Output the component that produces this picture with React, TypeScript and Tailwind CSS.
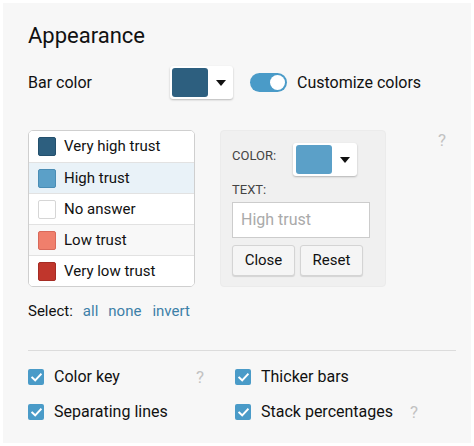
import React from "react";

const font = { fontFamily: "Roboto, 'Liberation Sans', sans-serif" };

function Caret() {
  return (
    <svg width="10" height="6" viewBox="0 0 10 6" className="shrink-0">
      <path d="M0 0 L10 0 L5 6 Z" fill="#111" />
    </svg>
  );
}

function Check() {
  return (
    <span className="flex h-[16px] w-[16px] items-center justify-center rounded-[2px] bg-[#4a9bc8]">
      <svg width="11" height="9" viewBox="0 0 11 9">
        <path d="M1.2 4.6 L4.2 7.4 L9.8 1.4" stroke="#fff" strokeWidth="2" fill="none" strokeLinecap="square" />
      </svg>
    </span>
  );
}

const rows = [
  { label: "Very high trust", color: "bg-[#2d5f7f]", border: "border-[#24506d]", bg: "bg-white" },
  { label: "High trust", color: "bg-[#5ba0c8]", border: "border-[#4a8db5]", bg: "bg-[#e9f2f8]" },
  { label: "No answer", color: "bg-white", border: "border-[#d6d6d6]", bg: "bg-white" },
  { label: "Low trust", color: "bg-[#f07f6c]", border: "border-[#d9695a]", bg: "bg-[#f8f8f8]" },
  { label: "Very low trust", color: "bg-[#c0362c]", border: "border-[#a52c24]", bg: "bg-white" },
];

export default function App() {
  return (
    <div className="h-[446px] w-[474px] bg-white p-[3px]" style={font}>
      <div className="flex h-[440px] w-[468px] flex-col bg-[#f7f7f7] pl-[25px] pr-[15px] pt-[20px] text-[#111]">
        <div className="text-[22px] leading-[26px]">Appearance</div>

        <div className="mt-[17px] flex h-[33px] items-center">
          <div className="w-[142px] text-[16px]">Bar color</div>
          <div className="flex h-[33px] w-[63px] items-center rounded-[3px] bg-white pl-[2px] shadow-[0_1px_2px_rgba(0,0,0,0.25)]">
            <div className="h-[29px] w-[36px] rounded-[3px] bg-[#2d5f7f]" />
            <div className="flex flex-1 justify-center">
              <Caret />
            </div>
          </div>
          <div className="ml-[17px] flex h-[19px] w-[37px] items-center justify-end rounded-full bg-[#4a9bc8] pr-[2px]">
            <div className="h-[15px] w-[15px] rounded-full bg-white" />
          </div>
          <div className="ml-[10px] text-[16px]">Customize colors</div>
        </div>

        <div className="mt-[31px] flex items-start">
          <div className="w-[167px] overflow-hidden rounded-[5px] border border-[#cfcfcf] bg-white">
            {rows.map((r, i) => (
              <div
                key={r.label}
                className={`flex h-[31px] items-center gap-[8px] pl-[9px] ${r.bg} ${i > 0 ? "border-t border-[#e2e2e2]" : ""}`}
              >
                <div className={`h-[19px] w-[18px] rounded-[2px] border ${r.color} ${r.border}`} />
                <div className="text-[15px]">{r.label}</div>
              </div>
            ))}
          </div>

          <div className="ml-[25px] flex h-[157px] w-[166px] flex-col rounded-[4px] border border-[#ebebeb] bg-[#f0f0f0] px-[11px] pt-[12px]">
            <div className="flex items-start">
              <div className="w-[61px] pt-[3px] text-[13px] text-[#444]">COLOR:</div>
              <div className="flex h-[33px] w-[64px] items-center rounded-[3px] bg-white pl-[3px] shadow-[0_1px_2px_rgba(0,0,0,0.25)]">
                <div className="h-[29px] w-[36px] rounded-[3px] bg-[#5ba0c8]" />
                <div className="flex flex-1 justify-center">
                  <Caret />
                </div>
              </div>
            </div>
            <div className="mt-[6px] text-[13px] leading-[16px] text-[#444]">TEXT:</div>
            <div className="mt-[4px] flex h-[36px] w-[138px] items-center border border-[#cccccc] bg-white pl-[8px] text-[16px] text-[#aaa]">
              High trust
            </div>
            <div className="mt-[7px] flex gap-[5px]">
              <div className="flex h-[31px] w-[63px] items-center justify-center rounded-[3px] border border-[#d4d4d4] bg-[#f5f5f5] text-[15px] shadow-[0_1px_1px_rgba(0,0,0,0.12)]">
                Close
              </div>
              <div className="flex h-[31px] w-[63px] items-center justify-center rounded-[3px] border border-[#d4d4d4] bg-[#f5f5f5] text-[15px] shadow-[0_1px_1px_rgba(0,0,0,0.12)]">
                Reset
              </div>
            </div>
          </div>

          <div className="ml-[52px] mt-[-2px] text-[17px] text-[#c2c2c2]">?</div>
        </div>

        <div className="mt-[14px] flex text-[15px] leading-[20px]">
          <span>Select:</span>
          <span className="ml-[10px] text-[#3d80a8]">all</span>
          <span className="ml-[10px] text-[#3d80a8]">none</span>
          <span className="ml-[11px] text-[#3d80a8]">invert</span>
        </div>

        <div className="mt-[29px] h-px w-[428px] bg-[#dcdcdc]" />

        <div className="mt-[14px] grid w-[400px] grid-cols-[207px_1fr] gap-y-[11px] leading-[24px]">
          <div className="flex h-[24px] items-center">
            <Check />
            <span className="ml-[10px] w-[142px] text-[16px]">Color key</span>
            <span className="text-[17px] text-[#c2c2c2]">?</span>
          </div>
          <div className="flex h-[24px] items-center">
            <Check />
            <span className="ml-[10px] text-[16px]">Thicker bars</span>
          </div>
          <div className="flex h-[24px] items-center">
            <Check />
            <span className="ml-[10px] text-[16px]">Separating lines</span>
          </div>
          <div className="flex h-[24px] items-center">
            <Check />
            <span className="ml-[10px] text-[16px]">Stack percentages</span>
            <span className="ml-[17px] text-[17px] text-[#c2c2c2]">?</span>
          </div>
        </div>
      </div>
    </div>
  );
}
